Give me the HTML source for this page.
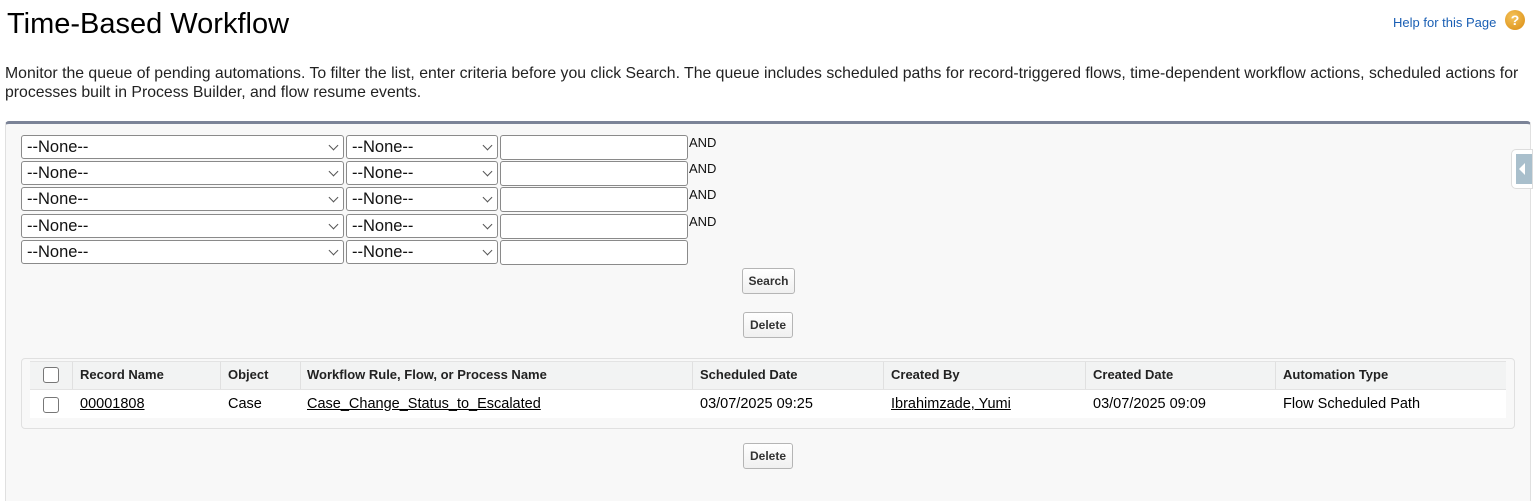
<!DOCTYPE html>
<html><head><style>
*{box-sizing:border-box;margin:0;padding:0}
body{width:1536px;height:484px;overflow:hidden;background:#fff;font-family:"Liberation Sans",Arial,sans-serif;color:#000;position:relative}
.a{position:absolute}
h1{position:absolute;left:7px;top:8px;font-size:29px;font-weight:normal;color:#000}
.help{left:1393px;top:15px;font-size:13px;color:#1a5fb4}
.q{left:1505px;top:10px;width:20px;height:20px;border-radius:50%;background:radial-gradient(circle at 40% 35%,#f5c35a,#d98b10);color:#fff;font-size:14px;font-weight:bold;text-align:center;line-height:20px}
.desc{left:5px;top:64px;width:1530px;font-size:15.8px;line-height:19px;color:#222}
.panel{left:5px;top:121px;width:1526px;height:380px;background:#f8f8f8;border-top:3px solid #7b8397;border-radius:4px 4px 0 0;border-left:1px solid #e0e0e0;border-right:1px solid #e0e0e0}
.sel{position:absolute;height:24px;border:1px solid #8a8a8a;border-radius:3px;background:#fff;font-size:16.5px;padding-left:5px;line-height:22px;color:#111}
.sel:after{content:"";position:absolute;right:6px;top:6px;width:6px;height:6px;border-right:1px solid #555;border-bottom:1px solid #555;transform:rotate(45deg)}
.inp{position:absolute;height:25px;border:1px solid #8a8a8a;border-radius:3px;background:#fff}
.and{position:absolute;font-size:13px;color:#111}
.btn{position:absolute;height:26px;border:1px solid #b5b5b5;border-radius:3px;background:linear-gradient(#fff,#f0f0f0);font-size:12px;font-weight:bold;color:#333;text-align:center;line-height:24px}
.tbox{left:21px;top:358px;width:1494px;height:71px;border:1px solid #e0e0e0;border-radius:4px;background:#f8f8f8}
.th{position:absolute;top:361px;height:29px;background:#f2f3f3;border-top:1px solid #e3e3e3;border-bottom:1px solid #e3e3e3}
.tr{position:absolute;top:390px;height:28px;background:#fff}
.c{position:absolute;line-height:14px}
.hd{font-weight:bold;top:368px;color:#222;font-size:13px}
.dt{top:397px;color:#000;font-size:14.5px}
.u{text-decoration:underline}
.cb{position:absolute;width:16px;height:16px;border:1px solid #777;border-radius:3px;background:#fff}
.vl{position:absolute;top:362px;width:1px;height:27px;background:#e0e0e0}
</style></head><body>
<h1>Time-Based Workflow</h1>
<div class="a help">Help for this Page</div>
<div class="a q">?</div>
<div class="a desc">Monitor the queue of pending automations. To filter the list, enter criteria before you click Search. The queue includes scheduled paths for record-triggered flows, time-dependent workflow actions, scheduled actions for processes built in Process Builder, and flow resume events.</div>
<div class="a panel"></div>
<div class="a" style="left:1511px;top:149px;width:22px;height:40px;border:1px solid #ddd;border-radius:5px 0 0 5px;background:#fff"><div style="position:absolute;left:4px;top:4px;width:16px;height:30px;background:#a9bfcc"></div><div style="position:absolute;left:7px;top:13px;border-right:6px solid #fff;border-top:6px solid transparent;border-bottom:6px solid transparent"></div></div>

<div class="sel" style="left:21px;top:135px;width:323px">--None--</div><div class="sel" style="left:346px;top:135px;width:152px">--None--</div><div class="inp" style="left:500px;top:135px;width:188px"></div><div class="and" style="left:689px;top:135px">AND</div>
<div class="sel" style="left:21px;top:161px;width:323px">--None--</div><div class="sel" style="left:346px;top:161px;width:152px">--None--</div><div class="inp" style="left:500px;top:161px;width:188px"></div><div class="and" style="left:689px;top:161px">AND</div>
<div class="sel" style="left:21px;top:187px;width:323px">--None--</div><div class="sel" style="left:346px;top:187px;width:152px">--None--</div><div class="inp" style="left:500px;top:187px;width:188px"></div><div class="and" style="left:689px;top:187px">AND</div>
<div class="sel" style="left:21px;top:214px;width:323px">--None--</div><div class="sel" style="left:346px;top:214px;width:152px">--None--</div><div class="inp" style="left:500px;top:214px;width:188px"></div><div class="and" style="left:689px;top:214px">AND</div>
<div class="sel" style="left:21px;top:240px;width:323px">--None--</div><div class="sel" style="left:346px;top:240px;width:152px">--None--</div><div class="inp" style="left:500px;top:240px;width:188px"></div>

<div class="btn" style="left:742px;top:268px;width:53px">Search</div>
<div class="btn" style="left:743px;top:312px;width:50px">Delete</div>

<div class="a tbox"></div>
<div class="th" style="left:30px;width:1476px"></div>
<div class="tr" style="left:30px;width:1476px"></div>
<div class="vl" style="left:72px"></div><div class="vl" style="left:220px"></div><div class="vl" style="left:300px"></div><div class="vl" style="left:692px"></div><div class="vl" style="left:883px"></div><div class="vl" style="left:1085px"></div><div class="vl" style="left:1275px"></div>
<div class="cb" style="left:43px;top:367px"></div>
<div class="c hd" style="left:80px">Record Name</div>
<div class="c hd" style="left:228px">Object</div>
<div class="c hd" style="left:307px">Workflow Rule, Flow, or Process Name</div>
<div class="c hd" style="left:700px">Scheduled Date</div>
<div class="c hd" style="left:891px">Created By</div>
<div class="c hd" style="left:1093px">Created Date</div>
<div class="c hd" style="left:1283px">Automation Type</div>
<div class="cb" style="left:43px;top:397px"></div>
<div class="c dt u" style="left:80px">00001808</div>
<div class="c dt" style="left:228px">Case</div>
<div class="c dt u" style="left:307px">Case_Change_Status_to_Escalated</div>
<div class="c dt" style="left:700px">03/07/2025 09:25</div>
<div class="c dt u" style="left:891px">Ibrahimzade, Yumi</div>
<div class="c dt" style="left:1093px">03/07/2025 09:09</div>
<div class="c dt" style="left:1283px">Flow Scheduled Path</div>

<div class="btn" style="left:743px;top:443px;width:50px">Delete</div>
</body></html>
